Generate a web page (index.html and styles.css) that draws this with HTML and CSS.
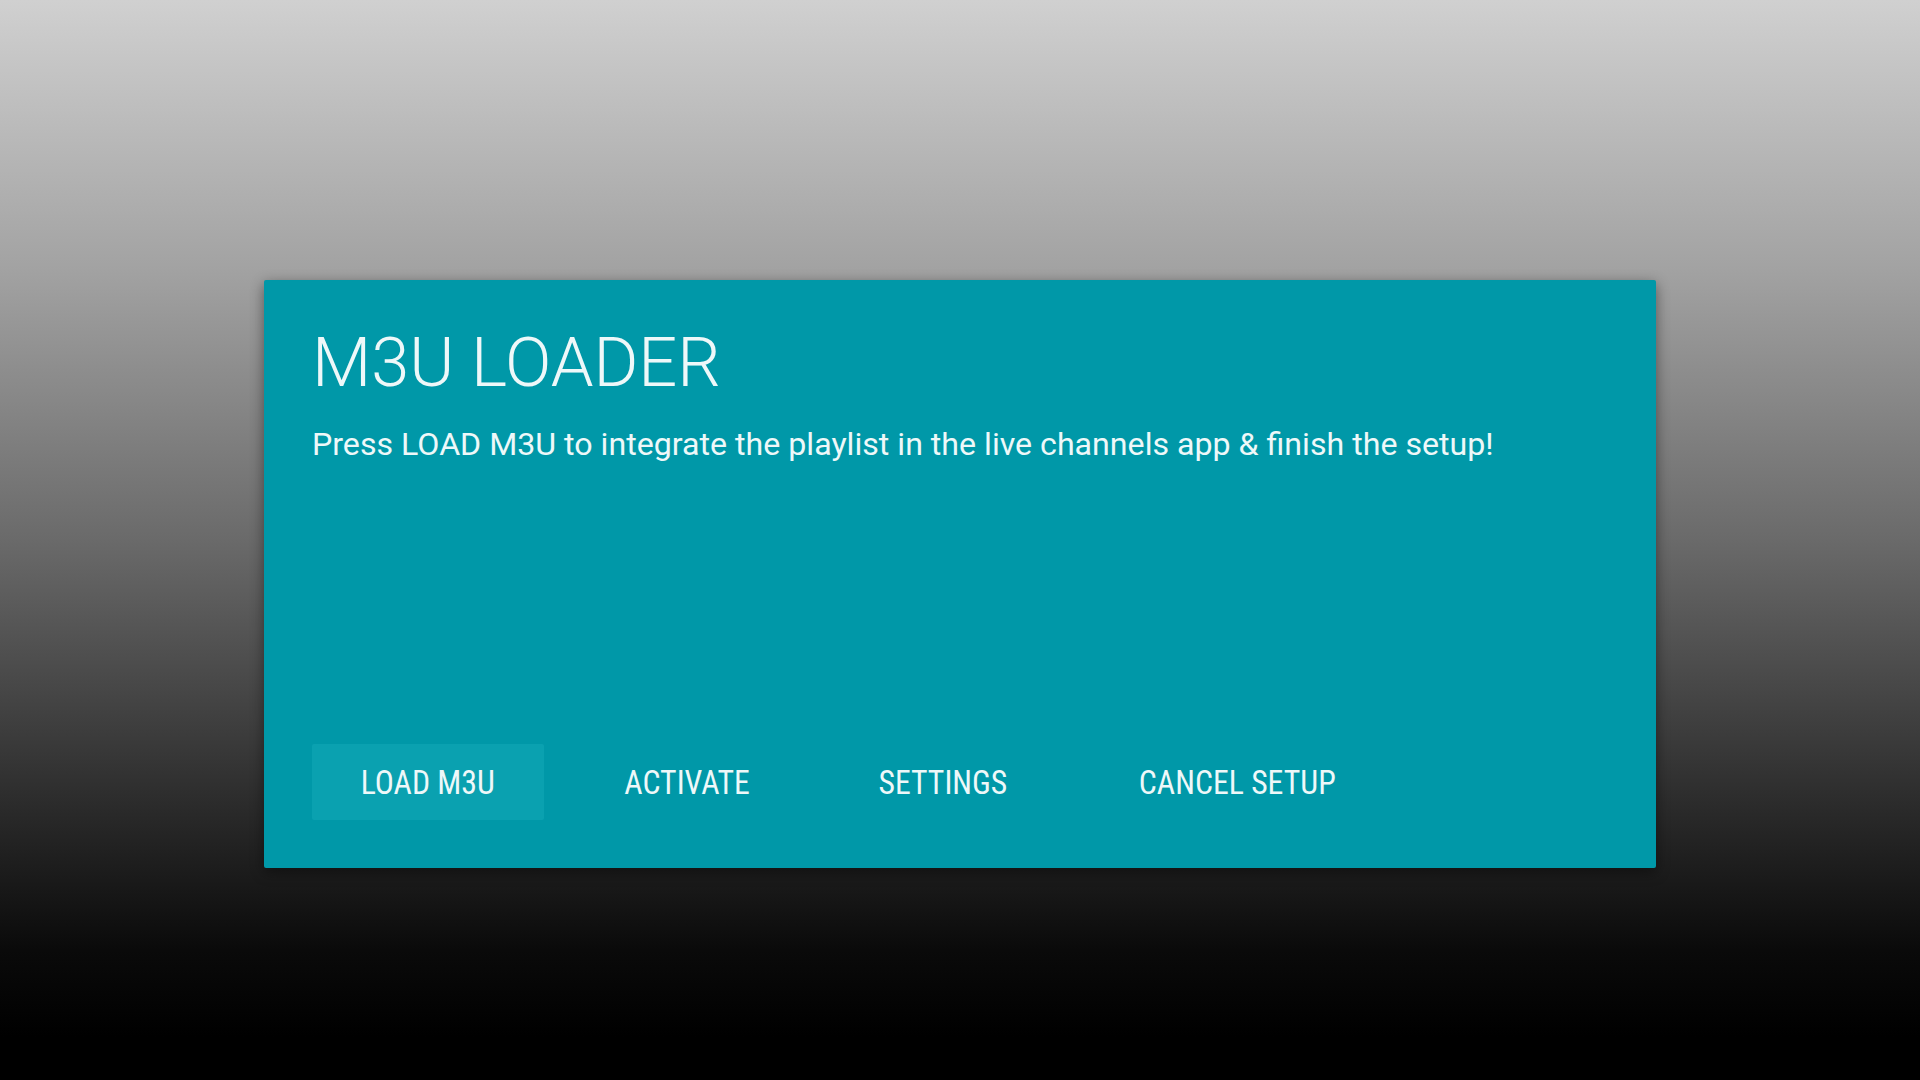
FILE: index.html
```html
<!DOCTYPE html>
<html lang="en">
<head>
<meta charset="utf-8">
<title>M3U Loader</title>
<link rel="stylesheet" href="styles.css">
</head>
<body>
<main class="screen">
  <section class="dialog">
    <h1 class="dialog-title">M3U LOADER</h1>
    <p class="dialog-text">Press LOAD M3U to integrate the playlist in the live channels app &amp; finish the setup!</p>
    <div class="actions">
      <button class="action is-focused"><span class="action-label">LOAD M3U</span></button>
      <button class="action"><span class="action-label">ACTIVATE</span></button>
      <button class="action"><span class="action-label">SETTINGS</span></button>
      <button class="action"><span class="action-label">CANCEL SETUP</span></button>
    </div>
  </section>
</main>
</body>
</html>
```
FILE: styles.css
```css
html, body {
  margin: 0;
  padding: 0;
  width: 1920px;
  height: 1080px;
  overflow: hidden;
}

body {
  font-family: Roboto, "Noto Sans", sans-serif;
  background: linear-gradient(to bottom, #d0d0d0 0%, #a2a2a2 25%, #6a6a6a 50%, #2a2a2a 75%, #0a0a0a 88%, #000000 96%, #000000 100%);
}

.screen {
  width: 1920px;
  height: 1080px;
  display: flex;
  align-items: flex-start;
  justify-content: flex-start;
  padding: 280px 0 0 264px;
  box-sizing: border-box;
}

.dialog {
  width: 1392px;
  height: 588px;
  box-sizing: border-box;
  background: #0098a8;
  border-radius: 2px;
  box-shadow: 0 4px 14px rgba(0, 0, 0, 0.45);
  padding: 49px 48px 48px 48px;
  display: flex;
  flex-direction: column;
  color: #eef8f9;
}

.dialog-title {
  margin: 0;
  font-family: Roboto, sans-serif;
  font-weight: 300;
  font-size: 68.5px;
  line-height: 68px;
  letter-spacing: 0;
}

.dialog-text {
  margin: 31px 0 0 0;
  font-family: Roboto, sans-serif;
  font-weight: 400;
  font-size: 32.15px;
  line-height: 32px;
}

.actions {
  margin-top: auto;
  display: flex;
  gap: 32px;
}

.action {
  height: 76px;
  padding: 0 44px;
  border: 0;
  border-radius: 2px;
  background: transparent;
  color: #eef8f9;
  font-family: "Roboto Condensed", Roboto, sans-serif;
  font-weight: 400;
  font-size: 34px;
  line-height: 76px;
  letter-spacing: 0;
  cursor: pointer;
}

.action-label {
  display: inline-block;
  transform: scaleX(0.935);
  transform-origin: center;
}

.action.is-focused {
  background: #0aa1b0;
}
```
